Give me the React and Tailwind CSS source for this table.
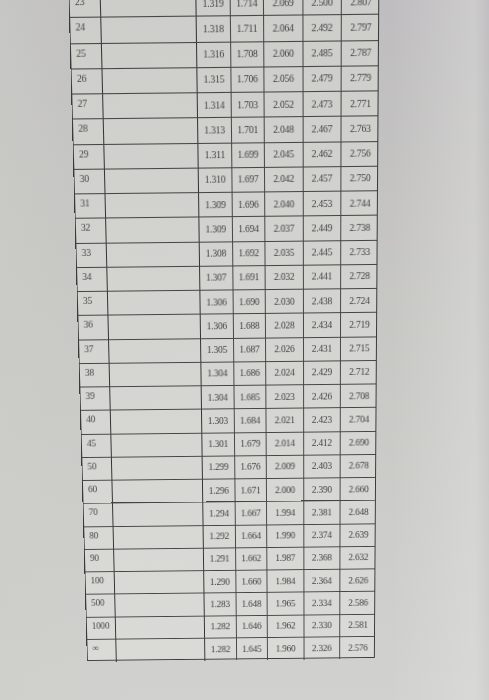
const ROWS = [
  ['23', '1.319', '1.714', '2.069', '2.500', '2.807'],
  ['24', '1.318', '1.711', '2.064', '2.492', '2.797'],
  ['25', '1.316', '1.708', '2.060', '2.485', '2.787'],
  ['26', '1.315', '1.706', '2.056', '2.479', '2.779'],
  ['27', '1.314', '1.703', '2.052', '2.473', '2.771'],
  ['28', '1.313', '1.701', '2.048', '2.467', '2.763'],
  ['29', '1.311', '1.699', '2.045', '2.462', '2.756'],
  ['30', '1.310', '1.697', '2.042', '2.457', '2.750'],
  ['31', '1.309', '1.696', '2.040', '2.453', '2.744'],
  ['32', '1.309', '1.694', '2.037', '2.449', '2.738'],
  ['33', '1.308', '1.692', '2.035', '2.445', '2.733'],
  ['34', '1.307', '1.691', '2.032', '2.441', '2.728'],
  ['35', '1.306', '1.690', '2.030', '2.438', '2.724'],
  ['36', '1.306', '1.688', '2.028', '2.434', '2.719'],
  ['37', '1.305', '1.687', '2.026', '2.431', '2.715'],
  ['38', '1.304', '1.686', '2.024', '2.429', '2.712'],
  ['39', '1.304', '1.685', '2.023', '2.426', '2.708'],
  ['40', '1.303', '1.684', '2.021', '2.423', '2.704'],
  ['45', '1.301', '1.679', '2.014', '2.412', '2.690'],
  ['50', '1.299', '1.676', '2.009', '2.403', '2.678'],
  ['60', '1.296', '1.671', '2.000', '2.390', '2.660'],
  ['70', '1.294', '1.667', '1.994', '2.381', '2.648'],
  ['80', '1.292', '1.664', '1.990', '2.374', '2.639'],
  ['90', '1.291', '1.662', '1.987', '2.368', '2.632'],
  ['100', '1.290', '1.660', '1.984', '2.364', '2.626'],
  ['500', '1.283', '1.648', '1.965', '2.334', '2.586'],
  ['1000', '1.282', '1.646', '1.962', '2.330', '2.581'],
  ['∞', '1.282', '1.645', '1.960', '2.326', '2.576'],
]

// column widths of the flat sheet, before the camera tilt
const COLS = ['w-[33px]', 'w-[32px]', 'w-[38px]', 'w-[37px]', 'w-[37px]']

function Row({ row, last }) {
  const [df, ...vals] = row
  return (
    <div className={`flex h-[24.25px] ${last ? '' : 'border-b border-[#444]'}`}>
      <div className="w-[30px] shrink-0 border-r-[1.5px] border-[#333] pl-[5px] pt-[5px] text-[#454545] leading-none">
        {df}
      </div>
      <div className="w-[92px] shrink-0 border-r-[1.5px] border-[#333]" />
      {vals.map((v, i) => (
        <div key={i}
          className={`${COLS[i]} shrink-0 flex items-center justify-center text-[#404040] ${i < 4 ? 'border-r border-[#474747]' : ''}`}>
          {v}
        </div>
      ))}
    </div>
  )
}

export default function App() {
  return (
    <div className="w-[489px] h-[700px] overflow-hidden bg-[linear-gradient(180deg,#bfbdbf_0%,#c7c7c4_45%,#d1d1cf_100%)] relative">
      {/* lighter band on the right side of the paper */}
      <div className="absolute inset-0 bg-[linear-gradient(90deg,rgba(205,207,200,0.5)_0%,rgba(0,0,0,0)_30%,rgba(0,0,0,0)_80%,rgba(230,230,228,0.35)_97%,rgba(200,200,200,0.2)_100%)]" />

      <div className="relative ml-[78px] mt-[-2px] w-[299px] h-[679px] [transform:perspective(1530px)_rotate(-0.6deg)_rotateX(-10deg)]">
        <div className="w-full h-full border border-[#3a3a3a] bg-[linear-gradient(180deg,#cdcdca_0%,#d4d4d1_50%,#dadad7_100%)] font-['Liberation_Serif',serif] text-[9.5px] tracking-[-0.2px]">
          {ROWS.map((r, i) => (
            <Row key={r[0]} row={r} last={i === ROWS.length - 1} />
          ))}
        </div>
      </div>
    </div>
  )
}
